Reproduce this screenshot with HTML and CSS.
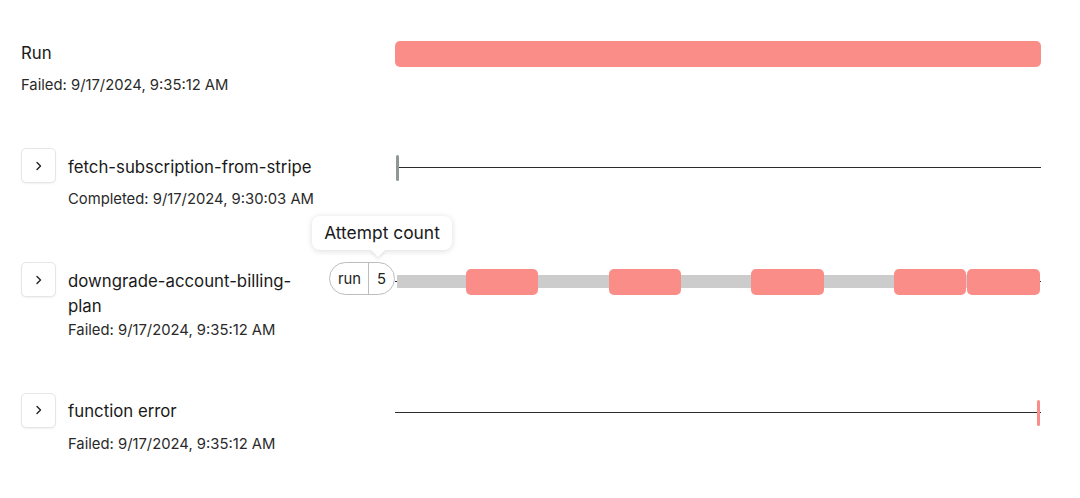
FILE: index.html
```html
<!DOCTYPE html>
<html>
<head>
<meta charset="utf-8">
<link rel="stylesheet" href="styles.css">
</head>
<body>
<div class="list">
  <div class="row">
    <div class="head">
      <div class="left">
        <div class="text"><div class="title">Run</div></div>
      </div>
      <div class="track">
        <div class="bar red" style="left:0;width:100%"></div>
      </div>
    </div>
    <div class="meta root">Failed: 9/17/2024, 9:35:12 AM</div>
  </div>

  <div class="row">
    <div class="head">
      <div class="left">
        <button class="toggle"><svg width="8" height="10" viewBox="0 0 8 10"><path d="M2 1.5 L5.5 5 L2 8.5" fill="none" stroke="#222" stroke-width="1.4" stroke-linecap="round" stroke-linejoin="round"/></svg></button>
        <div class="text"><div class="title">fetch-subscription-from-stripe</div></div>
      </div>
      <div class="track">
        <div class="line" style="left:2px;right:0"></div>
        <div class="tick gray" style="left:1px"></div>
      </div>
    </div>
    <div class="meta">Completed: 9/17/2024, 9:30:03 AM</div>
  </div>

  <div class="row">
    <div class="head">
      <div class="left">
        <button class="toggle"><svg width="8" height="10" viewBox="0 0 8 10"><path d="M2 1.5 L5.5 5 L2 8.5" fill="none" stroke="#222" stroke-width="1.4" stroke-linecap="round" stroke-linejoin="round"/></svg></button>
        <div class="text"><div class="title">downgrade-account-billing-plan</div></div>
      </div>
      <div class="track">
        <div class="pill"><span class="seg">run</span><span class="seg count">5</span>
          <div class="tooltip">Attempt count</div>
        </div>
        <div class="line" style="left:0;right:0"></div>
        <div class="gbar" style="left:2px;right:1px"></div>
        <div class="bar red" style="left:71px;width:72px"></div>
        <div class="bar red" style="left:214px;width:72px"></div>
        <div class="bar red" style="left:356px;width:73px"></div>
        <div class="bar red" style="left:499px;width:72px"></div>
        <div class="bar red" style="left:572px;width:73px"></div>
      </div>
    </div>
    <div class="meta">Failed: 9/17/2024, 9:35:12 AM</div>
  </div>

  <div class="row">
    <div class="head">
      <div class="left">
        <button class="toggle"><svg width="8" height="10" viewBox="0 0 8 10"><path d="M2 1.5 L5.5 5 L2 8.5" fill="none" stroke="#222" stroke-width="1.4" stroke-linecap="round" stroke-linejoin="round"/></svg></button>
        <div class="text"><div class="title">function error</div></div>
      </div>
      <div class="track">
        <div class="line" style="left:0;right:0"></div>
        <div class="tick red" style="left:642px"></div>
      </div>
    </div>
    <div class="meta">Failed: 9/17/2024, 9:35:12 AM</div>
  </div>
</div>
</body>
</html>
```

FILE: styles.css
```css
* { box-sizing: border-box; }
html, body { margin: 0; padding: 0; background: #fff; }
body {
  font-family: Inter, "Noto Sans", "Liberation Sans", sans-serif;
  color: #1c1c1c;
}
.list {
  padding: 34px 0 0 21px;
  display: flex;
  flex-direction: column;
  gap: 53px;
}
.row { display: flex; flex-direction: column; }
.head { display: flex; align-items: flex-start; }
.left {
  width: 374px;
  display: flex;
  align-items: flex-start;
  gap: 12px;
}
.toggle {
  width: 35px;
  height: 35px;
  flex: none;
  margin: 0;
  padding: 0;
  border: 1px solid #e6e6e6;
  border-radius: 5px;
  background: #fff;
  box-shadow: 0 1px 2px rgba(0,0,0,0.06);
  display: flex;
  align-items: center;
  justify-content: center;
}
.text { width: 250px; padding-top: 6.5px; }
.title {
  font-size: 16.8px;
  line-height: 25px;
  color: #1a1a1a;
}
.meta {
  margin-top: 1px;
  padding-left: 47px;
  font-size: 14.8px;
  line-height: 20px;
  color: #2a2a2a;
}
.meta.root { padding-left: 0; }
.track {
  position: relative;
  width: 646px;
  height: 40px;
  flex: none;
}
.bar {
  position: absolute;
  top: 7px;
  height: 26px;
  border-radius: 5px;
}
.red { background: #fa8d88; }
.line {
  position: absolute;
  top: 19px;
  height: 1px;
  background: #2b2b2b;
}
.gbar {
  position: absolute;
  top: 13px;
  height: 13px;
  background: #cccccc;
}
.tick {
  position: absolute;
  top: 7px;
  width: 3px;
  height: 26px;
  border-radius: 1.5px;
}
.tick.gray { background: #8f9894; }
.pill {
  position: absolute;
  right: 100%;
  top: 0;
  height: 33px;
  display: flex;
  align-items: stretch;
  border: 1px solid #bdbdbd;
  border-radius: 17px;
  background: #fff;
  font-size: 14.8px;
  color: #222;
}
.seg {
  display: flex;
  align-items: center;
  padding: 0 7px 0 8px;
}
.seg.count {
  position: relative;
  border-left: 1px solid #bdbdbd;
  padding: 0 8px 0 8px;
}
.tooltip {
  position: absolute;
  right: -58px;
  bottom: 100%;
  margin-bottom: 13px;
  width: 140px;
  height: 34px;
  border-radius: 8px;
  background: #fff;
  box-shadow: 0 1px 6px rgba(0,0,0,0.14);
  font-size: 17.4px;
  line-height: 34px;
  text-align: center;
  color: #1a1a1a;
  white-space: nowrap;
}
.tooltip::after {
  content: "";
  position: absolute;
  left: 61px;
  bottom: -5px;
  width: 10px;
  height: 10px;
  background: #fff;
  transform: rotate(45deg);
  box-shadow: 2px 2px 3px rgba(0,0,0,0.08);
}
```
